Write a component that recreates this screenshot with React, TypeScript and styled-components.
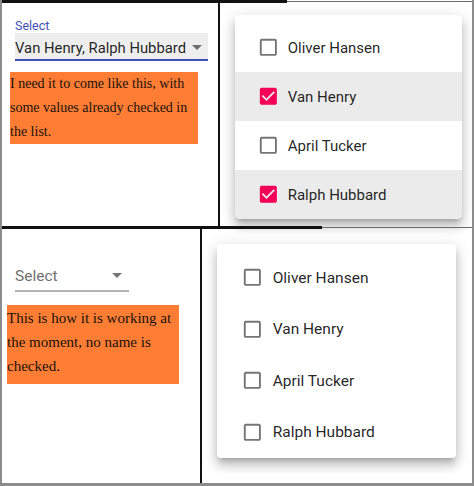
import React from 'react'
import styled, {createGlobalStyle} from 'styled-components'

const GlobalStyle = createGlobalStyle`
  html, body {
    margin: 0;
    padding: 0;
    background: #fff;
  }
  body {
    font-family: Roboto, "Noto Sans", Arial, sans-serif;
  }
`

const Frame = styled.div`
  box-sizing: border-box;
  width: 474px;
  height: 486px;
  border-left: 2px solid #8c8c8c;
  border-right: 2px solid #8c8c8c;
  border-bottom: 3px solid #8c8c8c;
  display: grid;
  grid-template-rows: 3px 223px 3px 1fr;
  overflow: hidden;
`
const Rule = styled.div<{$black: number}>`
  background:
    linear-gradient(#111, #111) no-repeat 0 0 / ${p => p.$black}px 3px,
    linear-gradient(#6a6a6a, #6a6a6a) no-repeat 0 1px / 100% 1px;
`
const Row = styled.div`
  display: flex;
  min-height: 0;
`
const Panel = styled.div<{$width?: number, $pad: string}>`
  box-sizing: border-box;
  flex: ${p => p.$width ? `0 0 ${p.$width}px` : '1 1 auto'};
  padding: ${p => p.$pad};
  border-right: ${p => p.$width ? '2px solid #111' : 'none'};
  display: flex;
  flex-direction: column;
  align-items: flex-start;
`

// select field
const Field = styled.div`
  margin-left: 13px;
  display: flex;
  flex-direction: column;
`
const Label = styled.label`
  font-size: 12.5px;
  line-height: 14px;
  color: #3f51b5;
`
const SelectBox = styled.div<{$width: number, $focused?: boolean}>`
  box-sizing: border-box;
  width: ${p => p.$width}px;
  display: flex;
  align-items: center;
  justify-content: space-between;
  padding: ${p => p.$focused ? '3px 6px 0 0' : '2px 7px 0 0'};
  height: ${p => p.$focused ? 28 : 33}px;
  background: ${p => p.$focused ? 'rgba(0, 0, 0, 0.065)' : 'transparent'};
  border-bottom: 2px solid ${p => p.$focused ? '#3f51b5' : '#b3b3b3'};
`
const Value = styled.span<{$placeholder?: boolean}>`
  font-size: ${p => p.$placeholder ? 15.5 : 14.8}px;
  line-height: 20px;
  color: ${p => p.$placeholder ? '#717171' : 'rgba(0, 0, 0, 0.87)'};
  white-space: nowrap;
`
const Arrow = () => (
    <svg width="10" height="5" viewBox="0 0 10 5">
        <path d="M0 0l5 5 5-5z" fill="rgba(0,0,0,0.54)"/>
    </svg>
)

// orange note
const Note = styled.p<{$inset: number, $width: number, $size: number, $pad?: string}>`
  margin: 0 0 0 ${p => p.$inset}px;
  width: ${p => p.$width}px;
  box-sizing: border-box;
  padding: ${p => p.$pad || '0'};
  background: #fd7d34;
  color: #1a120c;
  font-family: "Liberation Serif", "Times New Roman", serif;
  font-size: ${p => p.$size}px;
  line-height: 24px;
`

// menu
const Paper = styled.ul<{$width: number, $margin: string, $padBottom: number}>`
  list-style: none;
  margin: ${p => p.$margin};
  padding: 8px 0 ${p => p.$padBottom}px;
  width: ${p => p.$width}px;
  background: #fff;
  border-radius: 4px;
  box-shadow: 0 5px 5px -3px rgba(0, 0, 0, 0.2),
              0 8px 10px 1px rgba(0, 0, 0, 0.14),
              0 3px 14px 2px rgba(0, 0, 0, 0.12);
`
const Item = styled.li<{$height: number, $inset: number, $gap: number, $size: number, $selected?: boolean}>`
  display: flex;
  align-items: center;
  gap: ${p => p.$gap}px;
  height: ${p => p.$height}px;
  padding-left: ${p => p.$inset}px;
  background: ${p => p.$selected ? 'rgba(0, 0, 0, 0.08)' : 'transparent'};
  font-size: ${p => p.$size}px;
  color: rgba(0, 0, 0, 0.87);
`
const Check = ({checked}: {checked: boolean}) => (
    <svg width="22.7" height="22.7" viewBox="0 0 24 24">
        {checked ? (
            <path fill="#f50057"
                  d="M19 3H5c-1.11 0-2 .9-2 2v14c0 1.1.89 2 2 2h14c1.11 0 2-.9 2-2V5c0-1.1-.89-2-2-2zm-9 14l-5-5 1.41-1.41L10 14.17l7.59-7.59L19 8l-9 9z"/>
        ) : (
            <path fill="rgba(0,0,0,0.54)"
                  d="M19 5v14H5V5h14m0-2H5c-1.1 0-2 .9-2 2v14c0 1.1.9 2 2 2h14c1.1 0 2-.9 2-2V5c0-1.1-.9-2-2-2z"/>
        )}
    </svg>
)

const names = ['Oliver Hansen', 'Van Henry', 'April Tucker', 'Ralph Hubbard']

type MenuProps = {
    checked: string[],
    width: number,
    margin: string,
    padBottom: number,
    rowHeight: number,
    inset: number,
    gap: number,
    size: number
}
const Menu: React.FC<MenuProps> = ({checked, width, margin, padBottom, rowHeight, inset, gap, size}) => (
    <Paper $width={width} $margin={margin} $padBottom={padBottom}>
        {names.map(name => {
            const on = checked.includes(name)
            return (
                <Item key={name} $height={rowHeight} $inset={inset} $gap={gap} $size={size} $selected={on}>
                    <Check checked={on}/>
                    <span>{name}</span>
                </Item>
            )
        })}
    </Paper>
)

const App: React.FC = () => {
    const wanted = ['Van Henry', 'Ralph Hubbard']
    return (
        <>
            <GlobalStyle/>
            <Frame>
                <Rule $black={285}/>
                <Row>
                    <Panel $width={218} $pad="16px 0 0 0">
                        <Field>
                            <Label>Select</Label>
                            <SelectBox $width={193} $focused>
                                <Value>{wanted.join(', ')}</Value>
                                <Arrow/>
                            </SelectBox>
                        </Field>
                        <Note $inset={8} $width={188} $size={14} style={{marginTop: 11}}>
                            I need it to come like this, with some values already checked in the list.
                        </Note>
                    </Panel>
                    <Panel $pad="0">
                        <Menu checked={wanted} width={227} margin="12px 0 0 15px" padBottom={0}
                              rowHeight={49} inset={22} gap={8} size={15}/>
                    </Panel>
                </Row>
                <Rule $black={320}/>
                <Row>
                    <Panel $width={200} $pad="30px 0 0 0">
                        <Field>
                            <SelectBox $width={114}>
                                <Value $placeholder>Select</Value>
                                <Arrow/>
                            </SelectBox>
                        </Field>
                        <Note $inset={5} $width={172} $size={15} $pad="1px 0 6px" style={{marginTop: 13}}>
                            This is how it is working at the moment, no name is checked.
                        </Note>
                    </Panel>
                    <Panel $pad="0">
                        <Menu checked={[]} width={239} margin="15px 0 0 15px" padBottom={0}
                              rowHeight={51.5} inset={24} gap={9} size={15.5}/>
                    </Panel>
                </Row>
            </Frame>
        </>
    )
}

export default App
